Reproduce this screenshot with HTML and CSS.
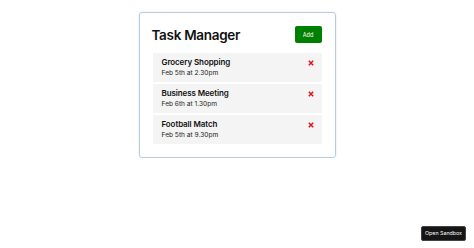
FILE: index.html
```html
<!DOCTYPE html>
<html>
<head>
    <title>Task Manager</title>
    <link rel="stylesheet" href="styles.css">
</head>
<body>
    <div class="container">
        <div class="header">
            <h1>Task Manager</h1>
            <button class="btn">Add</button>
        </div>
        <div class="tasks">
            <div class="task">
                <div class="task-info">
                    <h3>Grocery Shopping</h3>
                    <p>Feb 5th at 2.30pm</p>
                </div>
                <svg class="delete" width="6" height="6" viewBox="0 0 6 6"><path d="M0.8 0.8 L5.2 5.2 M5.2 0.8 L0.8 5.2" stroke="#e0141e" stroke-width="1.5"/></svg>
            </div>
            <div class="task">
                <div class="task-info">
                    <h3>Business Meeting</h3>
                    <p>Feb 6th at 1.30pm</p>
                </div>
                <svg class="delete" width="6" height="6" viewBox="0 0 6 6"><path d="M0.8 0.8 L5.2 5.2 M5.2 0.8 L0.8 5.2" stroke="#e0141e" stroke-width="1.5"/></svg>
            </div>
            <div class="task">
                <div class="task-info">
                    <h3>Football Match</h3>
                    <p>Feb 5th at 9.30pm</p>
                </div>
                <svg class="delete" width="6" height="6" viewBox="0 0 6 6"><path d="M0.8 0.8 L5.2 5.2 M5.2 0.8 L0.8 5.2" stroke="#e0141e" stroke-width="1.5"/></svg>
            </div>
        </div>
    </div>
    <a class="sandbox" href="#">Open Sandbox</a>
</body>
</html>
```

FILE: styles.css
```css
body {
    font-family: "Inter", "Open Sans", sans-serif;
    margin: 0;
    padding: 0;
    background-color: #fff;
}

.container {
    width: 169px;
    margin: 12px auto 0;
    padding: 13px;
    border: 1px solid #b9cde0;
    border-radius: 3px;
    box-shadow: 0 0 2px rgba(100, 140, 180, 0.25);
}

.header {
    display: flex;
    justify-content: space-between;
    align-items: center;
    height: 17px;
    margin-bottom: 10px;
}

.header h1 {
    margin: 0 0 0 -1px;
    font-size: 13.5px;
    font-weight: 600;
    color: #111;
    letter-spacing: -0.3px;
}

.btn {
    width: 27px;
    height: 17px;
    padding: 0;
    border: none;
    border-radius: 2px;
    background-color: #008000;
    color: #fff;
    font-family: inherit;
    font-size: 5.5px;
    cursor: pointer;
}

.tasks {
    display: flex;
    flex-direction: column;
    gap: 2px;
}

.task {
    display: flex;
    justify-content: space-between;
    align-items: flex-start;
    height: 29px;
    box-sizing: border-box;
    padding: 4px 8px 0 9px;
    background-color: #f4f4f4;
}

.task h3 {
    margin: 0;
    font-size: 8px;
    font-weight: 600;
    line-height: 11px;
    letter-spacing: -0.1px;
    color: #111;
}

.task p {
    margin: 0;
    font-size: 6.6px;
    line-height: 11px;
    color: #222;
}

.delete {
    margin-top: 3px;
}

.sandbox {
    position: fixed;
    right: 8px;
    bottom: 7px;
    padding: 0 3px;
    height: 13px;
    line-height: 13px;
    background-color: #151515;
    border: 1px solid #444;
    border-radius: 2px;
    color: #fff;
    font-size: 5.3px;
    text-decoration: none;
}
```
